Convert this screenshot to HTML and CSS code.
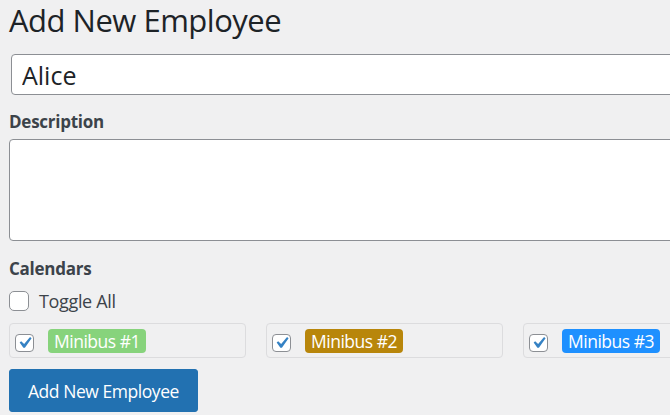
FILE: index.html
```html
<!DOCTYPE html>
<html lang="en">
<head>
<meta charset="utf-8">
<title>Add New Employee</title>
<link rel="stylesheet" href="styles.css">
</head>
<body>
<div class="wrap">
  <h1 class="title">Add New Employee</h1>
  <form class="form">
    <input class="name" type="text" value="Alice">
    <label class="label label-desc">Description</label>
    <textarea class="desc"></textarea>
    <label class="label label-cal">Calendars</label>
    <div class="toggle">
      <span class="cb cb-lg"></span>
      <span class="toggle-text">Toggle All</span>
    </div>
    <div class="cals">
      <div class="cal">
        <span class="cb cb-sm"><svg viewBox="0 0 20 20"><path d="M14.83 4.89l1.34.94-5.81 8.38H9.02L5.78 9.67l1.34-1.25 2.57 2.4z" fill="#3582c4"/></svg></span>
        <span class="badge badge-green">Minibus #1</span>
      </div>
      <div class="cal">
        <span class="cb cb-sm"><svg viewBox="0 0 20 20"><path d="M14.83 4.89l1.34.94-5.81 8.38H9.02L5.78 9.67l1.34-1.25 2.57 2.4z" fill="#3582c4"/></svg></span>
        <span class="badge badge-gold">Minibus #2</span>
      </div>
      <div class="cal">
        <span class="cb cb-sm"><svg viewBox="0 0 20 20"><path d="M14.83 4.89l1.34.94-5.81 8.38H9.02L5.78 9.67l1.34-1.25 2.57 2.4z" fill="#3582c4"/></svg></span>
        <span class="badge badge-blue">Minibus #3</span>
      </div>
    </div>
    <button class="btn" type="button">Add New Employee</button>
  </form>
</div>
</body>
</html>
```

FILE: styles.css
```css
html, body {
  margin: 0;
  padding: 0;
  overflow: hidden;
  background: #f0f0f1;
}
body {
  font-family: "Open Sans", "Noto Sans", sans-serif;
  color: #3c434a;
}
.wrap {
  width: 790px;
  padding-left: 9px;
}
.title {
  margin: 0;
  font-size: 31px;
  line-height: 40px;
  font-weight: 400;
  letter-spacing: -0.5px;
  color: #1d2327;
}
.form {
  display: flex;
  flex-direction: column;
  align-items: flex-start;
}
.name {
  box-sizing: border-box;
  margin: 14px 0 0 2px;
  width: 770px;
  height: 41px;
  padding: 0 10px;
  border: 1px solid #8c8f94;
  border-radius: 4px;
  background: #fff;
  font-family: inherit;
  font-size: 25px;
  color: #1d2327;
  outline: none;
}
.label {
  display: block;
  font-size: 17px;
  line-height: 24px;
  font-weight: 700;
  letter-spacing: -0.25px;
  color: #3c434a;
}
.label-desc {
  margin-top: 15px;
}
.desc {
  box-sizing: border-box;
  margin: 5px 0 0;
  width: 780px;
  height: 102px;
  border: 1px solid #8c8f94;
  border-radius: 4px;
  background: #fff;
  resize: none;
  outline: none;
}
.label-cal {
  margin-top: 16px;
}
.toggle {
  display: flex;
  align-items: center;
  gap: 10px;
  margin-top: 6px;
  height: 28px;
}
.toggle-text {
  font-size: 18px;
  line-height: 28px;
  letter-spacing: -0.35px;
  color: #3c434a;
}
.cb {
  box-sizing: border-box;
  display: inline-flex;
  align-items: center;
  justify-content: center;
  border: 1px solid #8c8f94;
  background: #fff;
  flex: none;
}
.cb-lg {
  width: 20px;
  height: 20px;
  border-radius: 5px;
}
.cb-sm {
  width: 19px;
  height: 18px;
  border-radius: 4px;
  margin-top: 4px;
}
.cb-sm svg {
  width: 24px;
  height: 24px;
  margin: -3px;
}
.cals {
  display: grid;
  grid-template-columns: repeat(3, 237px);
  column-gap: 20px;
  margin-top: 8px;
}
.cal {
  box-sizing: border-box;
  display: flex;
  align-items: center;
  gap: 14px;
  height: 35px;
  padding-left: 5px;
  border: 1px solid #dcdcde;
  border-radius: 4px;
}
.badge {
  display: inline-block;
  height: 24px;
  line-height: 24px;
  padding: 0 6px;
  border-radius: 4px;
  font-size: 17.5px;
  letter-spacing: -0.5px;
  color: #fff;
}
.badge-green { background: #87d37c; }
.badge-gold { background: #b8860b; }
.badge-blue { background: #1e90ff; }
.btn {
  margin-top: 11px;
  height: 43px;
  padding: 0 18px;
  border: 1px solid #2271b1;
  border-radius: 3px;
  background: #2271b1;
  color: #fff;
  font-family: inherit;
  font-size: 17.5px;
  letter-spacing: -0.45px;
  cursor: pointer;
}
```
